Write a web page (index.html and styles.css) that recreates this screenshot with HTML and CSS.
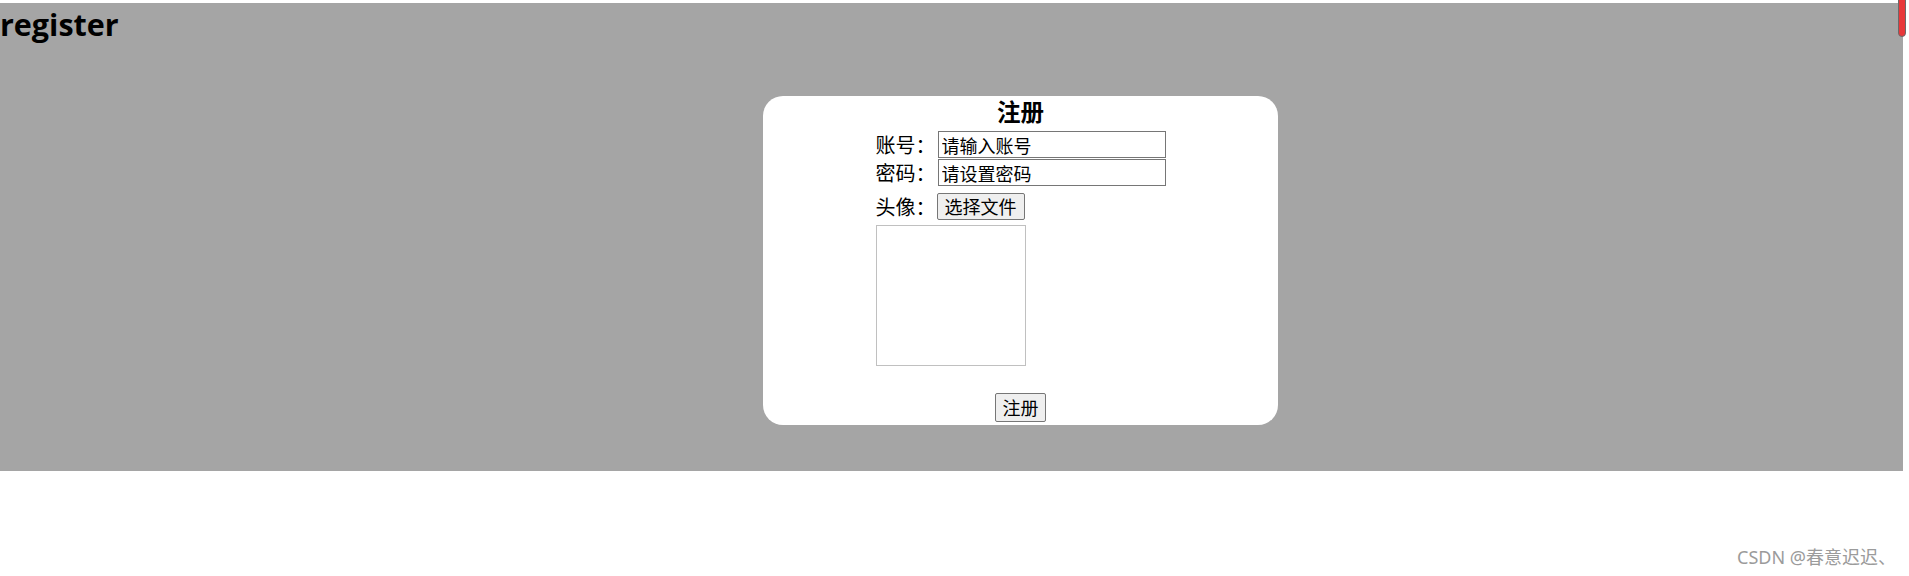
FILE: index.html
```html
<!DOCTYPE html>
<html lang="zh-CN">
<head>
<meta charset="utf-8">
<title>register</title>
<link rel="stylesheet" href="styles.css">
</head>
<body>
<div class="page">
  <div class="stage">
    <h1 class="page-title">register</h1>
    <div class="card">
      <h3 class="card-title">注册</h3>
      <form class="form">
        <div class="row">
          <span class="label">账号：</span>
          <input class="field" type="text" placeholder="请输入账号">
        </div>
        <div class="row">
          <span class="label">密码：</span>
          <input class="field" type="text" placeholder="请设置密码">
        </div>
        <div class="row row-file">
          <span class="label">头像：</span>
          <button class="btn btn-file" type="button">选择文件</button>
        </div>
        <div class="preview"></div>
      </form>
      <div class="actions">
        <button class="btn btn-submit" type="button">注册</button>
      </div>
    </div>
  </div>
  <div class="scroll-thumb"></div>
  <div class="watermark">CSDN @春意迟迟、</div>
</div>
</body>
</html>
```
FILE: styles.css
```css
html, body {
  margin: 0;
  padding: 0;
  background: #ffffff;
}

body {
  font-family: "Noto Sans", "Noto Sans CJK SC", sans-serif;
  color: #000;
}

.page {
  position: relative;
  width: 1909px;
  height: 576px;
  padding-top: 3px;
  box-sizing: border-box;
  overflow: hidden;
}

.stage {
  width: 1903px;
  height: 468px;
  background: #a5a5a5;
  box-sizing: border-box;
  display: flex;
  flex-direction: column;
}

.page-title {
  margin: 0;
  font-family: "Open Sans", "Noto Sans CJK SC", sans-serif;
  font-weight: 700;
  font-size: 30.5px;
  line-height: 42px;
}

.card {
  margin: 51px 0 0 763px;
  width: 515px;
  height: 329px;
  background: #ffffff;
  border-radius: 20px;
  display: flex;
  flex-direction: column;
  align-items: center;
}

.card-title {
  margin: 0;
  font-family: "Noto Sans CJK SC", sans-serif;
  font-weight: 700;
  font-size: 23.5px;
  line-height: 30px;
  text-align: center;
}

.form {
  margin-top: 5px;
  width: 290px;
  display: flex;
  flex-direction: column;
  gap: 1px;
}

.row {
  display: flex;
  align-items: center;
  height: 27px;
}

.row-file {
  margin-top: 6px;
}

.label {
  font-family: "Noto Sans CJK SC", sans-serif;
  font-size: 20px;
  line-height: 27px;
  width: 62px;
  flex: none;
}

.row-file .label {
  width: 61px;
}

.field {
  box-sizing: border-box;
  width: 228px;
  height: 27px;
  margin: 0;
  padding: 0 3px;
  border: 1px solid #767676;
  border-radius: 0;
  background: #fff;
  font-family: "Noto Sans CJK SC", sans-serif;
  font-size: 18px;
  color: #000;
  outline: none;
}

.field::placeholder {
  color: #000;
  opacity: 1;
}

.btn {
  box-sizing: border-box;
  height: 27px;
  margin: 0;
  padding: 0 6px;
  border: 1px solid #767676;
  border-radius: 2px;
  background: #efefef;
  font-family: "Noto Sans CJK SC", sans-serif;
  font-size: 18px;
  line-height: 25px;
  color: #000;
}

.btn-file {
  padding: 0 7px;
}

.preview {
  margin-top: 4px;
  width: 150px;
  height: 141px;
  box-sizing: border-box;
  border: 1px solid #c0c0c0;
  background: #fff;
}

.actions {
  margin-top: 27px;
  display: flex;
  justify-content: center;
}

.btn-submit {
  height: 29px;
  width: 51px;
  padding: 0;
}

.scroll-thumb {
  position: absolute;
  left: 1898px;
  top: -5px;
  width: 6px;
  height: 40px;
  background: #e8383a;
  border: 1.5px solid #6a6a6a;
  border-radius: 4px;
}

.watermark {
  position: absolute;
  right: 13px;
  top: 546px;
  font-family: "Noto Sans", "Noto Sans CJK SC", sans-serif;
  font-size: 18px;
  line-height: 22px;
  color: #9b9b9b;
  text-shadow: 0 0 1px #ffffff;
}
```
